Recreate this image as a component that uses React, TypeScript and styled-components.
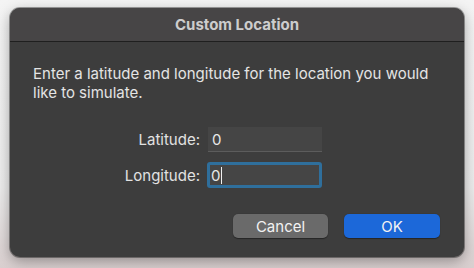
import React from "react";
import styled, { createGlobalStyle } from "styled-components";

const Global = createGlobalStyle`
  html, body { margin: 0; padding: 0; }
  body {
    width: 474px;
    height: 268px;
    overflow: hidden;
    background: linear-gradient(180deg, #f4f4f4 0%, #ececec 70%, #d9cfcf 100%);
    font-family: Inter, "Liberation Sans", Arial, sans-serif;
  }
`;

const Stage = styled.div`
  padding: 8px 10px 0 10px;
`;

const Window = styled.div`
  width: 454px;
  height: 249px;
  border-radius: 10px;
  background: #3d3d3d;
  box-shadow: 0 0 0 1px rgba(0, 0, 0, 0.35), 0 4px 14px rgba(0, 0, 0, 0.35);
  overflow: hidden;
  display: flex;
  flex-direction: column;
`;

const TitleBar = styled.div`
  height: 33px;
  flex: none;
  background: #474546;
  border-bottom: 1px solid #1f1f1f;
  display: flex;
  align-items: center;
  justify-content: center;
  color: #cdcdcd;
  font-weight: 700;
  font-size: 15px;
`;

const Body = styled.div`
  flex: 1;
  padding: 22px 0 0 23px;
  display: flex;
  flex-direction: column;
`;

const Message = styled.p`
  margin: 0;
  color: #e4e4e4;
  font-size: 15px;
  line-height: 19px;
  white-space: nowrap;
`;

const Form = styled.div`
  margin-top: 25px;
  display: grid;
  grid-template-columns: 167px 114px;
  column-gap: 7px;
  row-gap: 10px;
  align-items: center;
`;

const Label = styled.label`
  text-align: right;
  color: #e2e2e2;
  font-size: 15px;
`;

const Field = styled.div<{ $focused?: boolean }>`
  height: ${(p) => (p.$focused ? "20px" : "24px")};
  width: ${(p) => (p.$focused ? "108px" : "110px")};
  margin: ${(p) => (p.$focused ? "0" : "0 0 0 1px")};
  background: #454545;
  border: ${(p) => (p.$focused ? "3px solid #2f6f9c" : "none")};
  border-bottom: ${(p) => (p.$focused ? "3px solid #2f6f9c" : "1px solid #5c5c5c")};
  border-radius: ${(p) => (p.$focused ? "3px" : "0")};
  box-sizing: content-box;
  display: flex;
  align-items: center;
  padding-left: ${(p) => (p.$focused ? "1px" : "4px")};
  color: #e8e8e8;
  font-size: 15px;
`;

const Caret = styled.span`
  display: inline-block;
  width: 1px;
  height: 17px;
  background: #f0f0f0;
  margin-left: 1px;
`;

const Buttons = styled.div`
  margin-top: 26px;
  display: flex;
  gap: 16px;
  padding-left: 200px;
`;

const Button = styled.button<{ $primary?: boolean }>`
  width: ${(p) => (p.$primary ? "96px" : "95px")};
  height: 24px;
  border: none;
  border-radius: 5px;
  background: ${(p) => (p.$primary ? "#1c68d9" : "#6a6a6a")};
  color: #f2f2f2;
  font-family: Inter, "Liberation Sans", Arial, sans-serif;
  font-size: 15px;
  padding: 0;
  box-shadow: 0 0.5px 1px rgba(0, 0, 0, 0.4);
`;

export default function App() {
  return (
    <>
      <Global />
      <Stage>
        <Window>
          <TitleBar>Custom Location</TitleBar>
          <Body>
            <Message>
              Enter a latitude and longitude for the location you would
              <br />
              like to simulate.
            </Message>
            <Form>
              <Label>Latitude:</Label>
              <Field>0</Field>
              <Label>Longitude:</Label>
              <Field $focused>
                0<Caret />
              </Field>
            </Form>
            <Buttons>
              <Button>Cancel</Button>
              <Button $primary>OK</Button>
            </Buttons>
          </Body>
        </Window>
      </Stage>
    </>
  );
}
